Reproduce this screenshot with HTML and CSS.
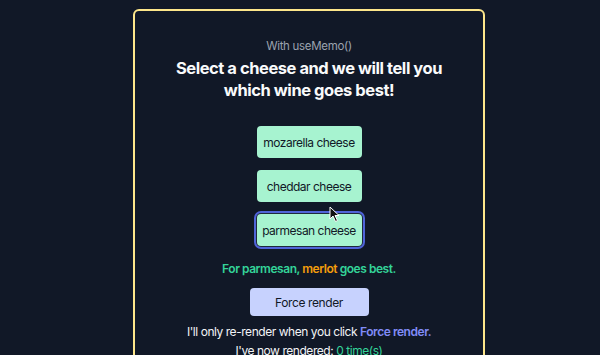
FILE: index.html
```html
<!DOCTYPE html>
<html lang="en">
<head>
    <meta charset="UTF-8">
    <meta name="viewport" content="width=device-width, initial-scale=1.0">
    <title>useMemo demo</title>
    <link rel="stylesheet" href="styles.css">
</head>
<body>
    <div class="card">
        <p class="subtitle">With useMemo()</p>
        <h1>Select a cheese and we will tell you which wine goes best!</h1>

        <div class="cheese-list">
            <button class="cheese-button">mozarella cheese</button>
            <button class="cheese-button">cheddar cheese</button>
            <button class="cheese-button selected">parmesan cheese</button>
            <!-- mouse pointer -->
            <svg class="cursor" width="12" height="17" viewBox="0 0 12 17">
                <path d="M1 1 L1 13 L4 10 L6.5 15.5 L8.5 14.5 L6 9.5 L10 9.5 Z" fill="#111" stroke="#fff" stroke-width="1"/>
            </svg>
        </div>

        <p class="result">For parmesan, <span class="wine">merlot</span> goes best.</p>

        <button class="force-button">Force render</button>

        <p class="note">I'll only re-render when you click <span class="highlight">Force render.</span></p>
        <p class="note">I've now rendered: <span class="count">0 time(s)</span></p>
    </div>
</body>
</html>
```

FILE: styles.css
```css
body {
    font-family: Inter, "Noto Sans", sans-serif;
    background-color: #111827;
    color: #f3f4f6;
    margin: 0;
    padding-top: 9px;
}

.card {
    width: 348px;
    margin-left: 133px;
    height: 400px;
    border: 2px solid #fde68a;
    border-radius: 6px;
    padding-top: 27px;
    display: flex;
    flex-direction: column;
    align-items: center;
    text-align: center;
}

.subtitle {
    margin: 0;
    font-size: 11.5px;
    line-height: 16px;
    letter-spacing: -0.3px;
    color: #9ca3af;
}

h1 {
    margin: 3px 0 0;
    width: 300px;
    font-size: 16.5px;
    line-height: 22px;
    letter-spacing: -0.45px;
    font-weight: 700;
    color: #f9fafb;
}

.cheese-list {
    position: relative;
    display: flex;
    flex-direction: column;
    align-items: center;
    gap: 12px;
    margin-top: 25px;
}

.cheese-button {
    width: 105px;
    height: 32px;
    border: none;
    border-radius: 4px;
    background-color: #a7f3d0;
    color: #111827;
    font-family: inherit;
    font-size: 12px;
    letter-spacing: -0.5px;
    padding: 0;
}

.cheese-button.selected {
    box-shadow: 0 0 0 1px #1e293b, 0 0 0 3px #4f63d8;
}

.cursor {
    position: absolute;
    left: 72px;
    top: 80px;
}

.result {
    margin: 15px 0 0;
    font-size: 12px;
    line-height: 16px;
    letter-spacing: -0.45px;
    font-weight: 600;
    color: #34d399;
}

.wine { color: #f59e0b; }

.force-button {
    margin-top: 11px;
    width: 119px;
    height: 28px;
    border: none;
    border-radius: 4px;
    background-color: #c7d2fe;
    color: #111827;
    font-family: inherit;
    font-size: 12px;
    letter-spacing: -0.4px;
    padding: 0;
}

.note {
    margin: 0;
    font-size: 12px;
    line-height: 19px;
    letter-spacing: -0.45px;
    color: #f3f4f6;
}

.force-button + .note { margin-top: 6px; }

.highlight {
    color: #818cf8;
    font-weight: 600;
}

.count { color: #34d399; }
```
